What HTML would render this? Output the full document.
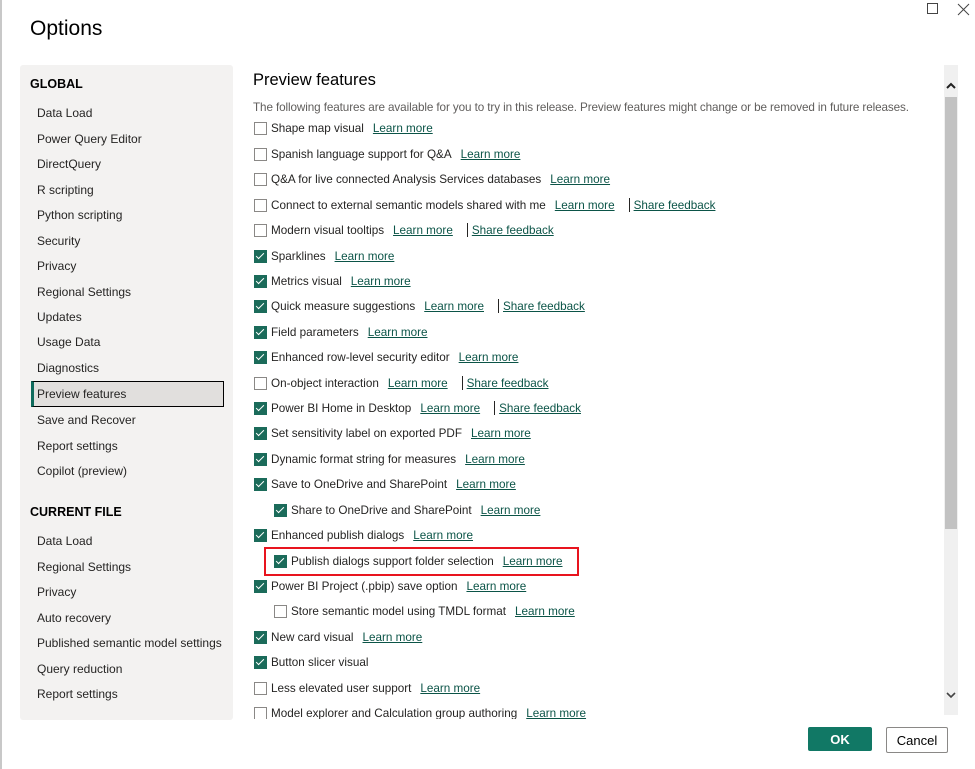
<!DOCTYPE html>
<html><head><meta charset="utf-8"><style>
body{margin:0;width:975px;height:769px;background:#fff;font-family:"Liberation Sans",sans-serif;color:#252423;position:relative;overflow:hidden}
.abs{position:absolute}
.lb{position:absolute;left:0;top:0;width:2px;height:769px;background:#c8c8c8}
h1{position:absolute;left:30px;top:17px;margin:0;font-size:21px;font-weight:normal;color:#000}
.side{position:absolute;left:20px;top:65px;width:213px;height:655px;background:#f3f2f1;border-radius:3px}
.sh{position:absolute;left:10px;font-size:12.5px;font-weight:bold;color:#000}
.si{position:absolute;left:17px;font-size:12px;color:#252423}
.sel{position:absolute;left:11px;top:316px;width:189px;height:24px;background:#e1dfdd;border:1px solid #000;border-left:3px solid #0f6b5c}
h2{position:absolute;left:253px;top:71px;margin:0;font-size:16.5px;font-weight:normal;color:#000}
.desc{position:absolute;left:253px;top:101px;font-size:11.7px;color:#605e5c;letter-spacing:-0.1px}
.clip{position:absolute;left:240px;top:115px;width:700px;height:604px;overflow:hidden}
.row{position:absolute;height:16px;display:flex;align-items:center;font-size:11.7px;white-space:nowrap}
.cb{width:11px;height:11px;border:1px solid #8a8886;background:#fff;margin-right:4px;flex:none;box-sizing:content-box}
.cb.on{background:#1b6b5a;border-color:#1b6b5a;position:relative}
.cb.on:after{content:"";position:absolute;left:3px;top:0px;width:3px;height:7px;border:solid #fff;border-width:0 1.6px 1.6px 0;transform:rotate(45deg)}
a{color:#0b5447;text-decoration:underline;margin-left:9px}
.sep{display:inline-block;width:1px;height:14px;background:#252423;margin-left:14px}
.sep+a{margin-left:4px}
.sb{position:absolute;left:944px;top:65px;width:14px;height:650px;background:#f0f0f0}
.thumb{position:absolute;left:945px;top:97px;width:12px;height:432px;background:#c2c2c2}
.btn{position:absolute;top:727px;height:24px;border-radius:2px;font-size:13px;display:flex;align-items:center;justify-content:center}
</style></head><body>
<div class="lb"></div>
<h1>Options</h1>
<svg class="abs" style="left:927px;top:3px" width="12" height="12"><rect x="0.5" y="0.5" width="10" height="10" fill="none" stroke="#444"/></svg>
<svg class="abs" style="left:957px;top:3px" width="13" height="13"><path d="M1 1L12 12M12 1L1 12" stroke="#444"/></svg>
<div class="side">
<div class="sh" style="top:12px">GLOBAL</div>
<div class="sel"></div>
<div class="si" style="top:41px">Data Load</div>
<div class="si" style="top:67px">Power Query Editor</div>
<div class="si" style="top:92px">DirectQuery</div>
<div class="si" style="top:118px">R scripting</div>
<div class="si" style="top:143px">Python scripting</div>
<div class="si" style="top:169px">Security</div>
<div class="si" style="top:194px">Privacy</div>
<div class="si" style="top:220px">Regional Settings</div>
<div class="si" style="top:245px">Updates</div>
<div class="si" style="top:270px">Usage Data</div>
<div class="si" style="top:296px">Diagnostics</div>
<div class="si" style="top:322px">Preview features</div>
<div class="si" style="top:348px">Save and Recover</div>
<div class="si" style="top:374px">Report settings</div>
<div class="si" style="top:399px">Copilot (preview)</div>
<div class="sh" style="top:440px">CURRENT FILE</div>
<div class="si" style="top:469px">Data Load</div>
<div class="si" style="top:495px">Regional Settings</div>
<div class="si" style="top:520px">Privacy</div>
<div class="si" style="top:546px">Auto recovery</div>
<div class="si" style="top:571px">Published semantic model settings</div>
<div class="si" style="top:597px">Query reduction</div>
<div class="si" style="top:622px">Report settings</div>
</div>
<h2>Preview features</h2>
<div class="desc">The following features are available for you to try in this release. Preview features might change or be removed in future releases.</div>
<div class="abs" style="left:264px;top:547px;width:311px;height:25px;border:2px solid #e8141e"></div>
<div class="clip">
<div class="row" style="left:14px;top:5px"><span class="cb"></span>Shape map visual<a>Learn more</a></div>
<div class="row" style="left:14px;top:31px"><span class="cb"></span>Spanish language support for Q&amp;A<a>Learn more</a></div>
<div class="row" style="left:14px;top:56px"><span class="cb"></span>Q&amp;A for live connected Analysis Services databases<a>Learn more</a></div>
<div class="row" style="left:14px;top:82px"><span class="cb"></span>Connect to external semantic models shared with me<a>Learn more</a><span class="sep"></span><a>Share feedback</a></div>
<div class="row" style="left:14px;top:107px"><span class="cb"></span>Modern visual tooltips<a>Learn more</a><span class="sep"></span><a>Share feedback</a></div>
<div class="row" style="left:14px;top:133px"><span class="cb on"></span>Sparklines<a>Learn more</a></div>
<div class="row" style="left:14px;top:158px"><span class="cb on"></span>Metrics visual<a>Learn more</a></div>
<div class="row" style="left:14px;top:183px"><span class="cb on"></span>Quick measure suggestions<a>Learn more</a><span class="sep"></span><a>Share feedback</a></div>
<div class="row" style="left:14px;top:209px"><span class="cb on"></span>Field parameters<a>Learn more</a></div>
<div class="row" style="left:14px;top:234px"><span class="cb on"></span>Enhanced row-level security editor<a>Learn more</a></div>
<div class="row" style="left:14px;top:260px"><span class="cb"></span>On-object interaction<a>Learn more</a><span class="sep"></span><a>Share feedback</a></div>
<div class="row" style="left:14px;top:285px"><span class="cb on"></span>Power BI Home in Desktop<a>Learn more</a><span class="sep"></span><a>Share feedback</a></div>
<div class="row" style="left:14px;top:310px"><span class="cb on"></span>Set sensitivity label on exported PDF<a>Learn more</a></div>
<div class="row" style="left:14px;top:336px"><span class="cb on"></span>Dynamic format string for measures<a>Learn more</a></div>
<div class="row" style="left:14px;top:361px"><span class="cb on"></span>Save to OneDrive and SharePoint<a>Learn more</a></div>
<div class="row" style="left:34px;top:387px"><span class="cb on"></span>Share to OneDrive and SharePoint<a>Learn more</a></div>
<div class="row" style="left:14px;top:412px"><span class="cb on"></span>Enhanced publish dialogs<a>Learn more</a></div>
<div class="row" style="left:34px;top:438px"><span class="cb on"></span>Publish dialogs support folder selection<a>Learn more</a></div>
<div class="row" style="left:14px;top:463px"><span class="cb on"></span>Power BI Project (.pbip) save option<a>Learn more</a></div>
<div class="row" style="left:34px;top:488px"><span class="cb"></span>Store semantic model using TMDL format<a>Learn more</a></div>
<div class="row" style="left:14px;top:514px"><span class="cb on"></span>New card visual<a>Learn more</a></div>
<div class="row" style="left:14px;top:539px"><span class="cb on"></span>Button slicer visual</div>
<div class="row" style="left:14px;top:565px"><span class="cb"></span>Less elevated user support<a>Learn more</a></div>
<div class="row" style="left:14px;top:590px"><span class="cb"></span>Model explorer and Calculation group authoring<a>Learn more</a></div>
</div>
<div class="sb"></div>
<div class="thumb"></div>
<svg class="abs" style="left:946px;top:82px" width="10" height="8"><path d="M1 6L5 2L9 6" fill="none" stroke="#222" stroke-width="2"/></svg>
<svg class="abs" style="left:946px;top:691px" width="10" height="8"><path d="M1 2L5 6L9 2" fill="none" stroke="#444" stroke-width="1.6"/></svg>
<div class="btn" style="left:808px;width:64px;background:#117865;color:#fff;font-weight:bold">OK</div>
<div class="btn" style="left:886px;width:62px;border:1px solid #8a8886;background:#fff;color:#000;box-sizing:border-box;height:26px;top:727px">Cancel</div>
</body></html>
